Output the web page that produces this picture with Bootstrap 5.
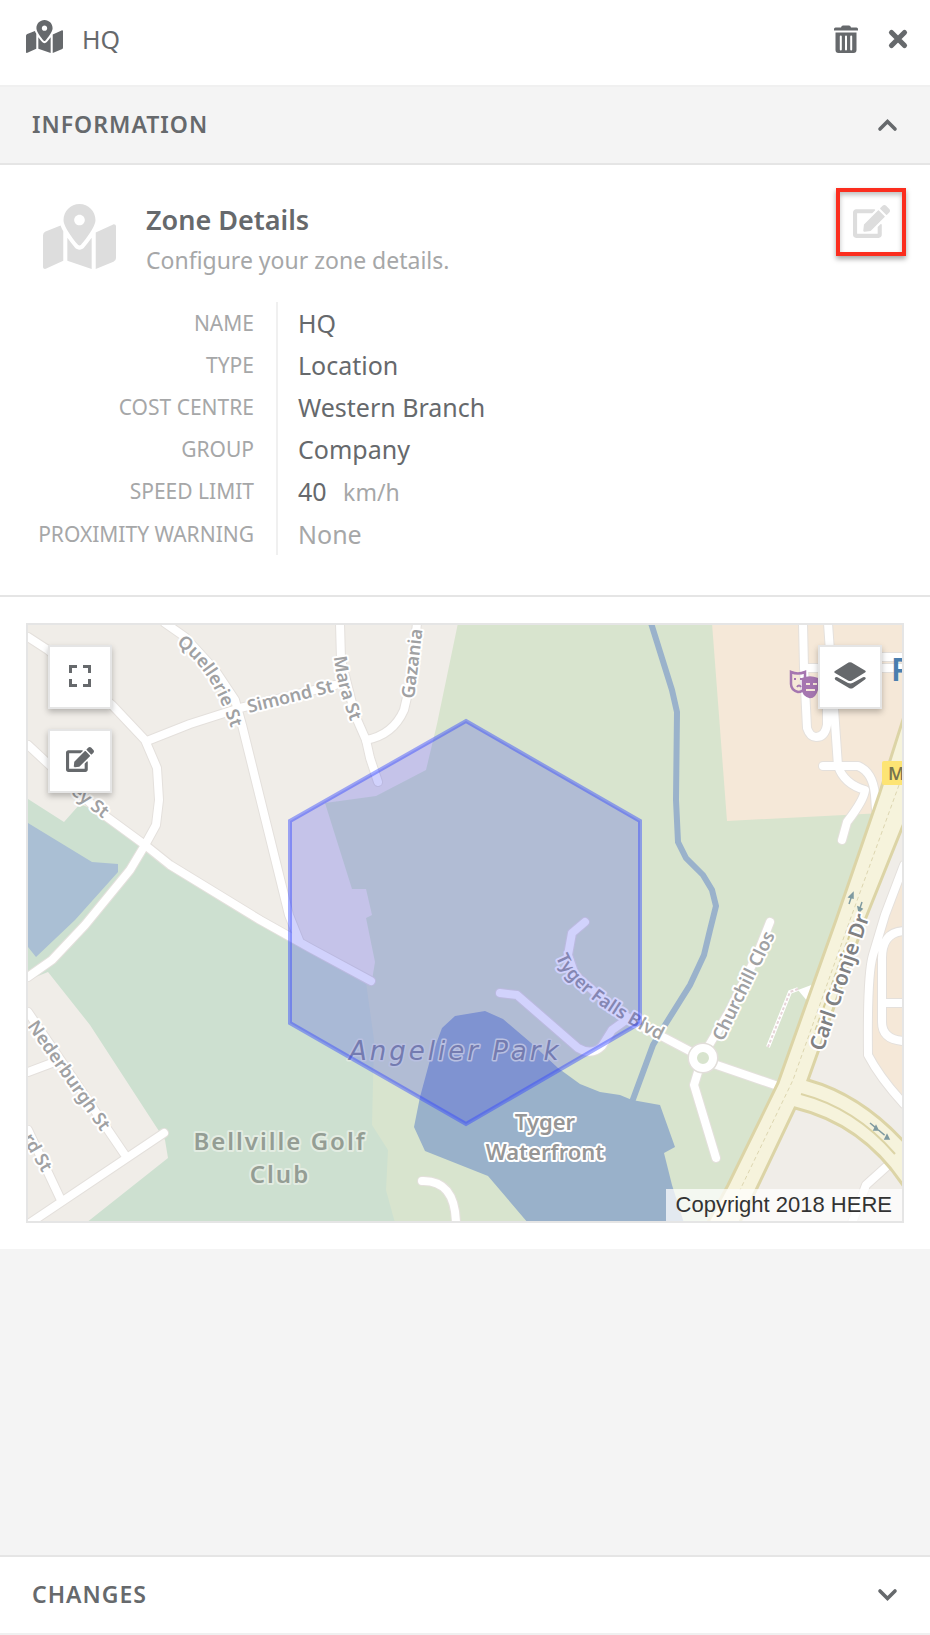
<!DOCTYPE html>
<html lang="en">
<head>
<meta charset="utf-8">
<meta name="viewport" content="width=device-width, initial-scale=1">
<title>HQ</title>
<link href="https://cdn.jsdelivr.net/npm/bootstrap@5.3.0/dist/css/bootstrap.min.css" rel="stylesheet">
<style>
  :root { --ink: #66696c; --soft: #a6a7a8; --pale: #dddddd; --rule: #e5e5e5; --fill: #f4f4f4; }
  body { font-family: "Noto Sans", "Open Sans", sans-serif; color: var(--ink); background: #fff; }
  svg { display: block; }
  .icon-fill { fill: currentColor; }
  .bare { border: 0; background: none; padding: 0; color: inherit; }
  .rule-bottom { border-bottom: 2px solid var(--rule); }
  .rule-top { border-top: 2px solid var(--rule); }
  .rule-end { border-bottom: 2px solid #f0f0f0; }
  .zone-head { height: 87px; padding: 0 21px 8px 26px; border-bottom: 2px solid #f0f0f0; }
  .zone-head h1 { font-size: 25px; font-weight: 400; padding-left: 19px; }
  .zone-head .head-icon { padding-bottom: 4px; }
  .section-bar { height: 78px; padding: 0 32px; font-size: 23px; font-weight: 600; letter-spacing: 1px; }
  .section-bar span { padding-bottom: 2px; }
  .section-open { background: var(--fill); }
  .details { padding: 23px 24px 40px 43px; }
  .details h2 { font-size: 27px; line-height: 40px; font-weight: 600; }
  .details p { font-size: 23px; line-height: 40px; color: var(--soft); }
  .title-icon { color: var(--pale); padding-top: 16px; }
  .title-text { padding: 12px 0 0 30px; }
  .edit-btn { width: 70px; height: 68px; border: 4px solid #fb2d1e; color: var(--pale); background: #fff; padding: 0 0 2px; border-radius: 0; box-shadow: 0 3px 5px rgba(0,0,0,.35), inset 0 3px 5px rgba(0,0,0,.25); }
  .facts { display: grid; grid-template-columns: 235px 1fr; margin: 22px 0 0; line-height: 42px; }
  .facts dt { font-size: 21px; font-weight: 400; color: var(--soft); padding-right: 22px; border-right: 2px solid #f0f0f0; white-space: nowrap; display: flex; justify-content: flex-end; }
  .facts dd { font-size: 25px; margin: 0; padding-left: 20px; }
  .facts .unit { font-size: 23px; color: var(--soft); margin-left: 10px; }
  .facts .unset { color: var(--soft); }
  .map-wrap { padding: 26px; }
  .map-frame { border: 2px solid var(--rule); height: 600px; overflow: hidden; }
  .map-frame > svg { width: 100%; height: 100%; }
  .map-btn { width: 64px; height: 64px; border: 2px solid var(--rule); border-radius: 0; background: #fff; color: var(--ink); padding: 0 0 3px; box-shadow: 0 3px 6px rgba(0,0,0,.25); }
  .map-left { top: 20px; left: 20px; gap: 20px; }
  .map-right { top: 20px; right: 20px; }
  .credit { font: 22px/32px "Liberation Sans", Arial, sans-serif; color: #333; background: rgba(255,255,255,.72); padding: 0 10px; }
  .filler { background: var(--fill); }

  .casing { fill: none; stroke: #e4e0dc; stroke-width: 10; stroke-linecap: round; stroke-linejoin: round; }
  .street { fill: none; stroke: #fff; stroke-width: 8; stroke-linecap: round; stroke-linejoin: round; }
  .lbl { font-family: "Noto Sans", sans-serif; font-size: 18px; font-weight: 600; fill: #a0a1a3; stroke: #fff; stroke-width: 4px; stroke-linejoin: round; paint-order: stroke; }
  .lbl-area { font-size: 24px; letter-spacing: 2px; fill: #949d94; stroke: #e3ece2; }
  .lbl-water { font-size: 22px; fill: #969696; }
  .lbl-main { font-size: 21px; fill: #808183; }
  .lbl-park { font: italic 26px "DejaVu Sans", sans-serif; letter-spacing: 3px; fill: #8b93a0; stroke: #e1e9de; stroke-width: 3px; }
</style>
</head>
<body>
<svg width="0" height="0" class="position-absolute" aria-hidden="true">
  <symbol id="i-map" viewBox="0 0 576 512"><path d="M288 0c-69.59 0-126 56.41-126 126 0 56.26 82.35 158.8 113.9 196.02 6.39 7.54 17.82 7.54 24.2 0C331.65 284.8 414 182.26 414 126 414 56.41 357.59 0 288 0zm0 168c-23.2 0-42-18.8-42-42s18.8-42 42-42 42 18.8 42 42-18.8 42-42 42zM20.12 215.95A32.006 32.006 0 0 0 0 245.66v250.32c0 11.32 11.43 19.06 21.94 14.86L160 448V214.92c-8.84-15.98-16.07-31.54-21.25-46.42L20.12 215.95zM288 359.67c-14.07 0-27.38-6.18-36.51-16.96-19.66-23.2-40.57-49.62-59.49-76.72v182l192 64V266c-18.92 27.09-39.82 53.52-59.49 76.72-9.13 10.77-22.44 16.95-36.51 16.95zm266.06-198.51L416 224v288l139.88-55.95A31.996 31.996 0 0 0 576 426.34V176.02c0-11.32-11.43-19.06-21.94-14.86z"/></symbol>
  <symbol id="i-edit" viewBox="0 0 576 512"><path d="M402.6 83.2l90.2 90.2c3.8 3.8 3.8 10 0 13.8L274.4 405.6l-92.8 10.3c-12.4 1.4-22.9-9.1-21.5-21.5l10.3-92.8L388.8 83.2c3.8-3.8 10-3.8 13.8 0zm162-22.9l-48.8-48.8c-15.2-15.2-39.9-15.2-55.2 0l-35.4 35.4c-3.8 3.8-3.8 10 0 13.8l90.2 90.2c3.8 3.8 10 3.8 13.8 0l35.4-35.4c15.2-15.3 15.2-40 0-55.2zM384 346.2V448H64V128h229.8c3.2 0 6.2-1.3 8.5-3.5l40-40c7.6-7.6 2.2-20.5-8.5-20.5H48C21.5 64 0 85.5 0 112v352c0 26.5 21.5 48 48 48h352c26.5 0 48-21.5 48-48V306.2c0-10.7-12.9-16-20.5-8.5l-40 40c-2.2 2.3-3.5 5.3-3.5 8.5z"/></symbol>
</svg>

<div class="d-flex flex-column min-vh-100">
  <header class="zone-head d-flex align-items-center">
    <div class="head-icon"><svg class="icon-fill" width="37" height="33" aria-hidden="true"><use href="#i-map"/></svg></div>
    <h1 class="mb-0 flex-grow-1">HQ</h1>
    <button class="bare me-4" type="button" aria-label="Delete">
      <svg width="26" height="28" viewBox="0 0 26 28"><path fill="currentColor" d="M8 2.500Q8.500 0.500 10 .500h6q1.500 0 2 2h5.500Q25 2.500 25 4v1.500H1V4q0-1.500 1.500-1.500zM2.500 7.500h21V25q0 3-3 3h-15q-3 0-3-3z"/><path d="M7.800 11.500v13M13 11.500v13M18.200 11.500v13" stroke="#fff" stroke-width="2" stroke-linecap="round"/></svg>
    </button>
    <button class="bare ms-1" type="button" aria-label="Close">
      <svg width="22" height="22" viewBox="0 0 22 22"><path d="M4.500 4.500l13 13M17.500 4.500l-13 13" stroke="currentColor" stroke-width="5.200" stroke-linecap="round"/></svg>
    </button>
  </header>

  <main class="d-flex flex-column flex-grow-1">
    <button class="bare section-bar section-open rule-bottom d-flex align-items-center justify-content-between w-100" type="button" aria-expanded="true">
      <span>INFORMATION</span>
      <svg width="21" height="14" viewBox="0 0 21 14" aria-hidden="true"><path d="M3 11l7.500-7.500L18 11" fill="none" stroke="currentColor" stroke-width="3.600" stroke-linecap="round"/></svg>
    </button>

    <section class="details rule-bottom">
      <div class="d-flex align-items-start">
        <div class="title-icon"><svg class="icon-fill" width="73" height="65" aria-hidden="true"><use href="#i-map"/></svg></div>
        <div class="title-text flex-grow-1">
          <h2 class="mb-0">Zone Details</h2>
          <p class="mb-0">Configure your zone details.</p>
        </div>
        <button class="edit-btn d-flex align-items-center justify-content-center" type="button" aria-label="Edit zone details">
          <svg class="icon-fill" width="37" height="33"><use href="#i-edit"/></svg>
        </button>
      </div>
      <dl class="facts">
        <dt>NAME</dt><dd>HQ</dd>
        <dt>TYPE</dt><dd>Location</dd>
        <dt>COST CENTRE</dt><dd>Western Branch</dd>
        <dt>GROUP</dt><dd>Company</dd>
        <dt>SPEED LIMIT</dt><dd>40 <span class="unit">km/h</span></dd>
        <dt>PROXIMITY WARNING</dt><dd class="unset">None</dd>
      </dl>
    </section>

    <section class="map-wrap">
      <div class="map-frame position-relative">
        <svg viewBox="28 625 874 596" preserveAspectRatio="xMidYMid slice" role="img" aria-label="Zone map">
          <defs>
            <path id="p-quell" d="M176 644Q211 668 231 728L239 750"/>
            <path id="p-mara" d="M334 657Q337 690 356 735"/>
            <path id="p-tyger" d="M556 957Q570 997 670 1045"/>
            <g id="streets">
              <path d="M28 637L48 650L112 705L145 740L157 768L159 800L156 825L145 845L130 870L85 925L52 960L28 977"/>
              <path d="M28 745L100 812L145 845L170 865L260 920L310 948L371 981"/>
              <path d="M165 623L185 637L215 670L235 700L242 725L289 915L299 940"/>
              <path d="M147 741L190 724L240 708L335 685"/>
              <path d="M340 623L341 660L355 715L366 740L370 758L378 782"/>
              <path d="M417 623L411 680L404 710Q393 735 366 740"/>
              <path d="M585 922L572 933L568 955L575 975L610 1005L640 1026L665 1038L703 1058"/>
              <path d="M500 993L517 995L578 1048Q592 1056 602 1046L612 1030L626 1020"/>
              <path d="M770 922L757 955L730 1010L705 1052M708 1062L778 1086M701 1062L694 1085L716 1158"/>
              <path d="M422 1181Q455 1180 456 1223"/>
              <path d="M164 1133L30 1223M28 1012L125 1155M28 1072L52 1063M28 1130L60 1198"/>
              <path d="M803 623L804 668L807 728Q810 737 816 737Q825 737 827 725L827 700M828 623L832 680L838 766Q844 784 865 790Q864 800 847 822L842 840M823 766H858Q873 772 875 795L876 810M804 668H832M860 657H904M860 668H904"/>
              <path d="M904 865L885 915L873 955Q867 975 868 1055Q880 1078 904 1104M904 931Q882 932 882 958V1022Q882 1040 904 1041M882 1003H904"/>
              <path d="M886 1167L866 1185L852 1223"/>
            </g>
          </defs>
          <rect x="0" y="600" width="930" height="640" fill="#f0ede8"/>
          <path fill="#cde0d0" d="M28 799L64 822L80 804L100 812L145 845L170 865L371 981L400 1100V1223H86L168 1158L165 1140L155 1125L90 1025L48 972L28 980z"/>
          <path fill="#aabfd4" d="M28 823L92 862L118 864V872L75 920L36 957L28 947z"/>
          <path fill="#d8e4ce" d="M458 623L437 724L426 770L376 796L325 803L352 889H366L372 915L366 918L375 962L372 980L366 982L374 1040L372 1125L388 1150L386 1190L395 1223H720L902 820V623z"/>
          <path fill="#f5e8d8" d="M712 623H902V812L727 821z"/>
          <path fill="#f0ede8" d="M902 810L808 1080L902 1140V1105L868 1055V970L902 875z"/>
          <path fill="#f5e8d8" d="M902 870V1100L868 1055V970z"/>
          <path fill="#f0ede8" d="M795 1108L740 1223H902V1180z"/>
          <path fill="none" stroke="#9ab2cb" stroke-width="6" d="M651 623L672 690L677 712L676 800L678 842L686 858L703 875L712 890L716 906L710 930L704 955L690 985L665 1025L653 1045L632 1102"/>
          <path fill="#99b1ca" d="M442 1028L455 1016L485 1011L503 1019L530 1042L558 1068L580 1084L600 1092L620 1095L632 1100L660 1105L675 1147L664 1153L672 1185L684 1223H528L488 1176L425 1151L414 1127L420 1097L430 1060z"/>
          <use href="#streets" class="casing"/>
          <use href="#streets" class="street"/>
          <circle cx="703" cy="1058" r="10" fill="#d8e4ce" stroke="#e2deda" stroke-width="11"/>
          <circle cx="703" cy="1058" r="10" fill="#d8e4ce" stroke="#fff" stroke-width="8"/>
          <path fill="#fff" d="M798 990L814 984L808 1002z"/>
          <path fill="none" stroke="#fff" stroke-width="4" d="M798 989L790 992L768 1047"/>
          <path fill="none" stroke="#e6d5d8" stroke-width="2" stroke-dasharray="3 2" d="M798 989L790 992L768 1047"/>
          <!-- Carl Cronje Drive and its slip road -->
          <path fill="#f6f3dc" stroke="#dcd4a6" stroke-width="3" d="M906 710L880 792L836 920L778 1083L728 1185L706 1226H738L757 1188L795 1108Q865 1125 906 1190V1144Q862 1095 808 1080L865 920L906 818z"/>
          <path fill="none" stroke="#dcd4a6" stroke-width="2" d="M801 1094Q855 1108 895 1154"/>
          <path fill="none" stroke="#ddd6b0" stroke-width="1" stroke-dasharray="4 3" d="M899 785L850 920L793 1080L740 1190"/>
          <path fill="none" stroke="#d8cf98" stroke-width="2" stroke-dasharray="5 3" d="M855 920L812 1040"/>
          <g stroke="#7f9aa0" stroke-width="1.500" fill="#7f9aa0"><path d="M849 904l3-9"/><path d="M849 897l4-4 0 5z"/><path d="M862 902l-3 9"/><path d="M858 907l4 2-3 3z"/><path d="M870 1123l18 15" stroke-dasharray="8 3"/><path d="M874 1130l4 0-2-4zM885 1139l4 0-2-4z"/></g>

          <text class="lbl"><textPath href="#p-quell">Quellerie St</textPath></text>
          <text class="lbl" transform="translate(249 713) rotate(-14)">Simond St</text>
          <text class="lbl"><textPath href="#p-mara">Mara St</textPath></text>
          <text class="lbl" transform="translate(414 699) rotate(-83)">Gazania</text>
          <text class="lbl" transform="translate(70 793) rotate(38)">ey St</text>
          <text class="lbl" transform="translate(27 1026) rotate(55)">Nederburgh St</text>
          <text class="lbl" transform="translate(22 1138) rotate(60)">rd St</text>
          <text class="lbl" transform="translate(723 1042) rotate(-64)">Churchill Clos</text>
          <text class="lbl lbl-main" transform="translate(823 1052) rotate(-71)">Carl Cronje Dr</text>
          <text class="lbl"><textPath href="#p-tyger">Tyger Falls Blvd</textPath></text>
          <text class="lbl lbl-area" x="280" y="1150" text-anchor="middle">Bellville Golf</text>
          <text class="lbl lbl-area" x="280" y="1183" text-anchor="middle">Club</text>
          <text class="lbl lbl-water" x="545" y="1130" text-anchor="middle">Tyger</text>
          <text class="lbl lbl-water" x="545" y="1160" text-anchor="middle">Waterfront</text>
          <text class="lbl lbl-park" x="349" y="1060">Angelier Park</text>

          <path d="M466 721L640 821V1023L466 1124L290 1023V821z" fill="rgba(24,32,240,.2)" stroke="rgba(50,70,255,.45)" stroke-width="4"/>
          <!-- theatre masks -->
          <g fill="none" stroke="#a576b0" stroke-width="2.500"><path d="M791 672q7 3 14 0v15q-2 5-7 5-7-2-7-8z"/><path d="M803 679q7-3 14 0v10q-2 8-7 8-7-2-7-8z" fill="#a576b0"/></g><path d="M806 684h4m3 0h4M806 690h9" stroke="#f5e8d8" stroke-width="2"/><path d="M794 679h2m4 0h2M797 687q2-3 4 0" stroke="#a576b0" stroke-width="2" fill="none"/>
          <text x="891" y="681" font-family="Noto Sans, sans-serif" font-size="32" font-weight="600" fill="#4a7eae">P</text>
          <rect x="882" y="761" width="30" height="24" rx="2" fill="#fde474"/>
          <text x="888" y="780" font-family="Noto Sans, sans-serif" font-size="18" font-weight="600" fill="#77744f">M</text>
        </svg>

        <div class="map-left position-absolute d-flex flex-column">
          <button class="map-btn d-flex align-items-center justify-content-center" type="button" aria-label="Full screen">
            <svg width="22" height="22" viewBox="0 0 22 22"><path d="M1.500 8V1.500H8M14 1.500h6.500V8M20.500 14v6.500H14M8 20.500H1.500V14" fill="none" stroke="currentColor" stroke-width="3"/></svg>
          </button>
          <button class="map-btn d-flex align-items-center justify-content-center" type="button" aria-label="Edit shape">
            <svg class="icon-fill" width="28" height="25"><use href="#i-edit"/></svg>
          </button>
        </div>
        <div class="map-right position-absolute">
          <button class="map-btn d-flex align-items-center justify-content-center" type="button" aria-label="Layers">
            <svg width="32" height="27" viewBox="0 0 32 27"><path fill="currentColor" d="M14.500.500Q16 0 17.500.500L31 8.500Q32.500 9.500 31 10.500L18 18.500Q16 19.500 14 18.500L1 11Q-.500 10 1 9zM1.500 15.200Q2.500 14.800 3.500 15.300L14 21Q16.500 22 19 20.800L29 15.200Q30 14.600 31 15.200Q32.500 16.300 31 17.500L19 26Q17 27 15 26L1.500 18Q0 16.500 1.500 15.200z"/></svg>
          </button>
        </div>
        <div class="credit position-absolute bottom-0 end-0">Copyright 2018 HERE</div>
      </div>
    </section>

    <div class="filler flex-grow-1"></div>

    <div class="rule-end">
      <button class="bare section-bar rule-top d-flex align-items-center justify-content-between w-100" type="button" aria-expanded="false">
        <span>CHANGES</span>
        <svg width="21" height="14" viewBox="0 0 21 14" aria-hidden="true"><path d="M3 3l7.500 7.500L18 3" fill="none" stroke="currentColor" stroke-width="3.600" stroke-linecap="round"/></svg>
      </button>
    </div>
  </main>
</div>
<script src="https://cdn.jsdelivr.net/npm/bootstrap@5.3.0/dist/js/bootstrap.bundle.min.js"></script>
</body>
</html>
